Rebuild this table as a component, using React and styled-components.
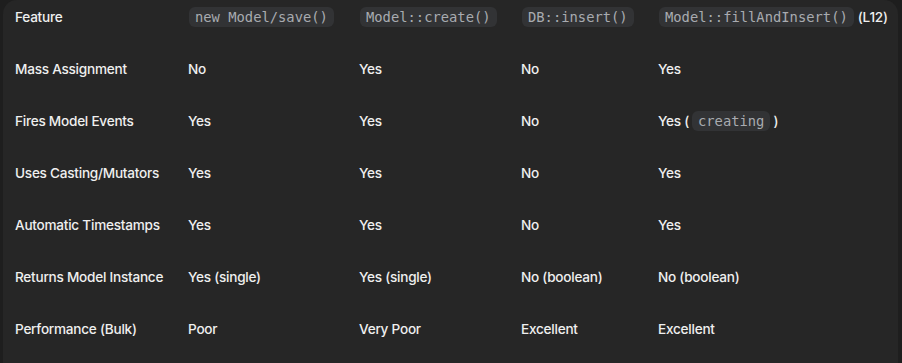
import styled, { createGlobalStyle } from "styled-components";

const GlobalStyle = createGlobalStyle`
    html, body {
        margin: 0;
        padding: 0;
        background: #1e1e1e;
    }
    body {
        font-family: Inter, "Noto Sans", sans-serif;
    }
`

const Frame = styled.div`
    width: 902px;
    height: 363px;
    padding: 0 4px 0 3px;
    box-sizing: border-box;
    background: #1e1e1e;
    overflow: hidden;
`

const Panel = styled.div`
    height: 100%;
    background: #262626;
    border-radius: 14px 14px 0 0;
    overflow: hidden;
`

const Grid = styled.div`
    display: grid;
    grid-template-columns: 173px 171px 162px 137px 1fr;
    padding-left: 12px;
    margin-top: -9px;
`

const Row = styled.div`
    display: contents;
`

const Cell = styled.div`
    height: 52px;
    display: flex;
    align-items: center;
    gap: ${(p) => (p.$head ? "4px" : "3px")};
    color: #efefef;
    font-size: 13.6px;
    font-weight: 500;
    letter-spacing: -0.25px;
    white-space: nowrap;
`

const Code = styled.code`
    font-family: "DejaVu Sans Mono", "Liberation Mono", monospace;
    font-size: 13.8px;
    font-weight: 400;
    letter-spacing: 0;
    color: #a8abb0;
    background: #323335;
    border-radius: 6px;
    padding: 2px 6px;
    line-height: 16px;
    margin-left: ${(p) => (p.$tight ? "0" : "1px")};
`

const header = ["Feature", "new Model/save()", "Model::create()", "DB::insert()", "Model::fillAndInsert()"]

const rows = [
    ["Mass Assignment", "No", "Yes", "No", "Yes"],
    ["Fires Model Events", "Yes", "Yes", "No", "creating"],
    ["Uses Casting/Mutators", "Yes", "Yes", "No", "Yes"],
    ["Automatic Timestamps", "Yes", "Yes", "No", "Yes"],
    ["Returns Model Instance", "Yes (single)", "Yes (single)", "No (boolean)", "No (boolean)"],
    ["Performance (Bulk)", "Poor", "Very Poor", "Excellent", "Excellent"],
]

const App = () => {
    return (
        <>
            <GlobalStyle />
            <Frame>
                <Panel>
                    <Grid>
                        <Row>
                            {header.map((h, i) => (
                                <Cell key={h} $head>
                                    {i === 0 ? h : <Code>{h}</Code>}
                                    {i === 4 && <span>(L12)</span>}
                                </Cell>
                            ))}
                        </Row>
                        {rows.map((r) => (
                            <Row key={r[0]}>
                                {r.map((c, i) => (
                                    <Cell key={i}>
                                        {c === "creating" ? (
                                            <>
                                                Yes (<Code $tight>creating</Code>)
                                            </>
                                        ) : c}
                                    </Cell>
                                ))}
                            </Row>
                        ))}
                    </Grid>
                </Panel>
            </Frame>
        </>
    )
}

export default App;
